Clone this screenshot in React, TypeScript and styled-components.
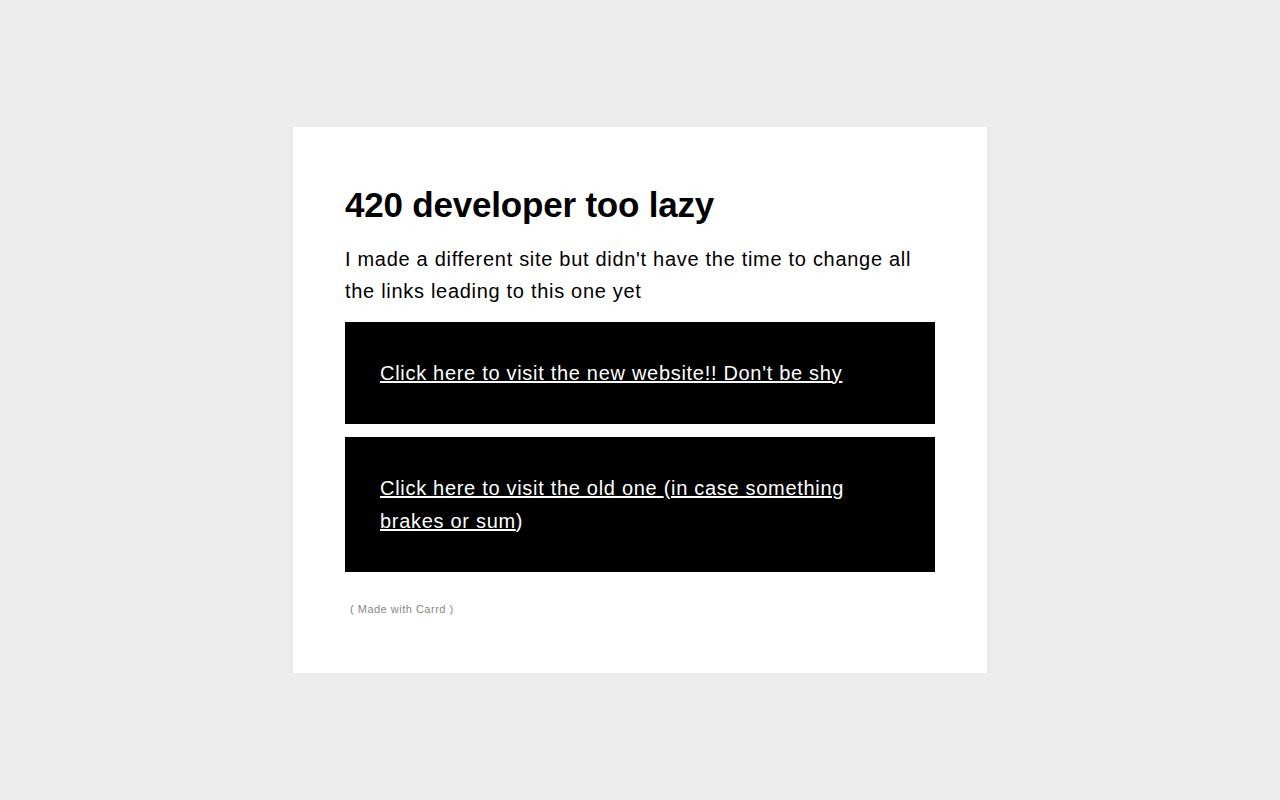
import React from "react";
import styled, { createGlobalStyle } from "styled-components";

const GlobalStyle = createGlobalStyle`
  html, body {
    margin: 0;
    padding: 0;
    background-color: #ececec;
    font-family: "Liberation Sans", Arial, sans-serif;
  }
`;

const SPage = styled.div`
  min-height: 800px;
  display: flex;
  justify-content: center;
  align-items: flex-start;
  padding-top: 127px;
  box-sizing: border-box;
`;

const SCard = styled.div`
  width: 694px;
  background-color: #ffffff;
  padding: 51px 52px 48px;
  box-sizing: border-box;
  display: flex;
  flex-direction: column;
`;

const STitle = styled.h1`
  margin: 0;
  font-size: 35px;
  line-height: 54px;
  font-weight: 700;
  letter-spacing: -0.2px;
  color: #000;
`;

const SText = styled.p`
  margin: 11px 0 15px;
  font-size: 20px;
  line-height: 32px;
  letter-spacing: 0.7px;
  color: #000;
`;

const SButtonBox = styled.div`
  background-color: #000;
  padding: 34.5px 35px;
  margin-bottom: 13px;
  font-size: 20px;
  line-height: 33px;
  letter-spacing: 0.7px;
  color: #fff;

  a {
    color: #fff;
    text-decoration: underline;
  }
`;

const SFooter = styled.p`
  margin: 8px 0 0 5px;
  font-size: 11px;
  line-height: 32px;
  letter-spacing: 0.5px;
  color: #888;
`;

const App = () => {
  return (
    <>
      <GlobalStyle />
      <SPage>
        <SCard>
          <STitle>420 developer too lazy</STitle>
          <SText>
            I made a different site but didn't have the time to change all the links
            leading to this one yet
          </SText>
          <SButtonBox>
            <a href="#">Click here to visit the new website!! Don't be shy</a>
          </SButtonBox>
          <SButtonBox>
            <a href="#">Click here to visit the old one </a>(
            <a href="#">in case something brakes or sum</a>)
          </SButtonBox>
          <SFooter>( Made with Carrd )</SFooter>
        </SCard>
      </SPage>
    </>
  );
};

export default App;
